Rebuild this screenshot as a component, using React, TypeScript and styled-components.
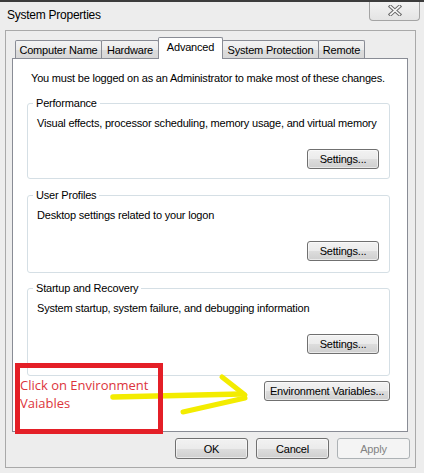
import React from "react";
import styled, { createGlobalStyle } from "styled-components";

const GlobalStyle = createGlobalStyle`
  html, body {
    margin: 0;
    padding: 0;
    background: #ededed;
  }
  body {
    font-family: "Liberation Sans", Arial, sans-serif;
    font-size: 11px;
    letter-spacing: -0.2px;
    color: #000;
  }
`;

const Window = styled.div`
  position: relative;
  width: 424px;
  height: 473px;
  box-sizing: border-box;
  border-top: 2px solid #3c3c3c;
  background: #ededed;
  overflow: hidden;
`;

const TitleBar = styled.div`
  display: flex;
  justify-content: space-between;
  align-items: flex-start;
  height: 28px;
`;

const Title = styled.div`
  margin: 5px 0 0 7px;
  font-size: 12px;
  letter-spacing: -0.25px;
  line-height: 16px;
`;

const CloseButton = styled.div`
  display: flex;
  align-items: center;
  justify-content: center;
  width: 51px;
  height: 21px;
  margin: -2px 4px 0 0;
  box-sizing: border-box;
  border: 1px solid #a4a4a4;
  border-top: none;
  border-radius: 0 0 4px 4px;
  background: linear-gradient(#f4f4f4, #e4e4e4);
`;

const Frame = styled.div`
  display: flex;
  flex-direction: column;
  width: 411px;
  height: 438px;
  margin-left: 5px;
  padding-top: 6px;
  box-sizing: border-box;
  border: 1px solid #a9a9a9;
`;

const TabStrip = styled.div`
  display: flex;
  align-items: flex-start;
  height: 21px;
  padding-left: 9px;
`;

const Tab = styled.div<{ $w: number; $active?: boolean }>`
  position: relative;
  z-index: ${(p) => (p.$active ? 2 : 1)};
  display: flex;
  align-items: center;
  justify-content: center;
  width: ${(p) => p.$w}px;
  height: ${(p) => (p.$active ? 22 : 18)}px;
  margin-top: ${(p) => (p.$active ? 0 : 3)}px;
  margin-left: -1px;
  box-sizing: border-box;
  border: 1px solid #898c95;
  border-bottom: none;
  border-radius: 2px 2px 0 0;
  background: ${(p) =>
    p.$active ? "#fff" : "linear-gradient(#f3f3f3 0%, #ebebeb 50%, #dcdcdc 51%, #d8d8d8 100%)"};
  padding-bottom: ${(p) => (p.$active ? 3 : 0)}px;
  white-space: nowrap;

  &:first-child {
    margin-left: 0;
  }
`;

const Panel = styled.div`
  position: relative;
  display: flex;
  flex-direction: column;
  width: 396px;
  height: 374px;
  margin-left: 6px;
  box-sizing: border-box;
  border: 1px solid #898c95;
  background: #fff;
`;

const Intro = styled.div`
  margin-top: 12px;
  padding-left: 18px;
  line-height: 14px;
`;

const GroupBox = styled.div<{ $h: number; $gap: number }>`
  position: relative;
  display: flex;
  flex-direction: column;
  width: 363px;
  height: ${(p) => p.$h}px;
  margin: ${(p) => p.$gap}px 0 0 14px;
  box-sizing: border-box;
  border: 1px solid #d5dfe5;
  border-radius: 3px;
`;

const Legend = styled.span`
  position: absolute;
  top: -8px;
  left: 5px;
  padding: 0 3px;
  line-height: 14px;
  background: #fff;
`;

const Desc = styled.div`
  margin-top: 12px;
  padding-left: 9px;
  line-height: 14px;
`;

const ButtonRow = styled.div<{ $top: number; $right: number }>`
  display: flex;
  justify-content: flex-end;
  gap: 8px;
  margin-top: ${(p) => p.$top}px;
  padding-right: ${(p) => p.$right}px;
`;

const DialogButton = styled.button<{ $w: number; $h?: number }>`
  width: ${(p) => p.$w}px;
  height: ${(p) => p.$h ?? 20}px;
  padding: 0;
  box-sizing: border-box;
  border: 1px solid #707070;
  border-radius: 3px;
  background: linear-gradient(#f2f2f2 0%, #ebebeb 50%, #dddddd 51%, #cfcfcf 100%);
  box-shadow: inset 0 0 0 1px rgba(255, 255, 255, 0.55);
  font-family: "Liberation Sans", Arial, sans-serif;
  font-size: 11px;
  letter-spacing: -0.2px;
  color: #000;

  &:disabled {
    border-color: #adb2b5;
    background: #f4f4f4;
    box-shadow: none;
    color: #838383;
  }
`;

const Note = styled.div`
  position: absolute;
  left: 15px;
  top: 361px;
  width: 148px;
  height: 71px;
  box-sizing: border-box;
  border: 5px solid #e41f27;
  padding-top: 8px;
  font-family: "Open Sans", sans-serif;
  font-size: 13px;
  letter-spacing: 0;
  line-height: 18px;
  color: #dc343c;
  white-space: nowrap;
`;

const Arrow = styled.svg`
  position: absolute;
  left: 100px;
  top: 365px;
`;

const CloseGlyph = () => (
  <svg width="14" height="11" viewBox="0 0 14 11">
    <g strokeLinecap="square">
      <path d="M2.5 1.5 L11.5 9.5 M11.5 1.5 L2.5 9.5" stroke="#6b6b6b" strokeWidth="3.6" />
      <path d="M2.5 1.5 L11.5 9.5 M11.5 1.5 L2.5 9.5" stroke="#fafafa" strokeWidth="1.6" />
    </g>
  </svg>
);

export default function App() {
  return (
    <>
      <GlobalStyle />
      <Window>
        <TitleBar>
          <Title>System Properties</Title>
          <CloseButton>
            <CloseGlyph />
          </CloseButton>
        </TitleBar>
        <Frame>
          <TabStrip>
            <Tab $w={87}>Computer Name</Tab>
            <Tab $w={58}>Hardware</Tab>
            <Tab $w={65} $active>
              Advanced
            </Tab>
            <Tab $w={97}>System Protection</Tab>
            <Tab $w={47}>Remote</Tab>
          </TabStrip>
          <Panel>
            <Intro>You must be logged on as an Administrator to make most of these changes.</Intro>

            <GroupBox $h={76} $gap={18}>
              <Legend>Performance</Legend>
              <Desc>Visual effects, processor scheduling, memory usage, and virtual memory</Desc>
              <ButtonRow $top={19} $right={10}>
                <DialogButton $w={72}>Settings...</DialogButton>
              </ButtonRow>
            </GroupBox>

            <GroupBox $h={78} $gap={16}>
              <Legend>User Profiles</Legend>
              <Desc>Desktop settings related to your logon</Desc>
              <ButtonRow $top={19} $right={10}>
                <DialogButton $w={72}>Settings...</DialogButton>
              </ButtonRow>
            </GroupBox>

            <GroupBox $h={88} $gap={15}>
              <Legend>Startup and Recovery</Legend>
              <Desc>System startup, system failure, and debugging information</Desc>
              <ButtonRow $top={19} $right={10}>
                <DialogButton $w={72}>Settings...</DialogButton>
              </ButtonRow>
            </GroupBox>

            <ButtonRow $top={5} $right={17}>
              <DialogButton $w={126}>Environment Variables...</DialogButton>
            </ButtonRow>
          </Panel>
          <ButtonRow $top={6} $right={5}>
            <DialogButton $w={73} $h={21}>
              OK
            </DialogButton>
            <DialogButton $w={73} $h={21}>
              Cancel
            </DialogButton>
            <DialogButton $w={73} $h={21} disabled>
              Apply
            </DialogButton>
          </ButtonRow>
        </Frame>

        <Arrow width="155" height="55" viewBox="0 0 155 55">
          <g stroke="#f3ec00" strokeWidth="5" strokeLinecap="round" fill="none">
            <path d="M13 30 L141 27" strokeWidth="5.5" />
            <path d="M122 10 L145 28" />
            <path d="M83 45 L145 31" />
          </g>
        </Arrow>
        <Note>
          Click on Environment
          <br />
          Vaiables
        </Note>
      </Window>
    </>
  );
}
